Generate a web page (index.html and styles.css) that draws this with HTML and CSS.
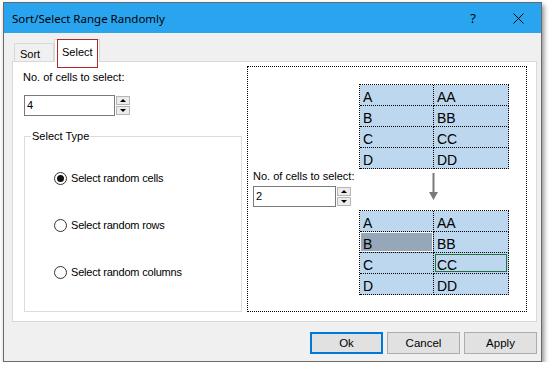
FILE: index.html
```html
<!DOCTYPE html>
<html>
<head>
<meta charset="utf-8">
<link rel="stylesheet" href="styles.css">
</head>
<body>
<div class="window">
  <div class="titlebar">
    <span class="title">Sort/Select Range Randomly</span>
    <span class="help">?</span>
    <svg class="close" width="11" height="11" viewBox="0 0 11 11"><path d="M0.5 0.5 L10.5 10.5 M10.5 0.5 L0.5 10.5" stroke="#000" stroke-width="1" fill="none"/></svg>
  </div>
  <div class="content">
    <div class="tabs">
      <div class="tab">Sort</div>
      <div class="tab active">Select</div>
    </div>
    <div class="highlight"></div>
    <div class="panel">
      <div class="left">
        <div class="label">No. of cells to select:</div>
        <div class="spin-row">
          <div class="input wide">4</div>
          <div class="spin"><span class="sbtn"><i class="up"></i></span><span class="sbtn"><i class="down"></i></span></div>
        </div>
        <div class="group">
          <div class="group-title">Select Type</div>
          <div class="radio first"><span class="circle checked"></span>Select random cells</div>
          <div class="radio"><span class="circle"></span>Select random rows</div>
          <div class="radio"><span class="circle"></span>Select random columns</div>
        </div>
      </div>
      <div class="preview">
        <div class="grid top">
          <div class="c">A</div><div class="c">AA</div>
          <div class="c">B</div><div class="c">BB</div>
          <div class="c">C</div><div class="c">CC</div>
          <div class="c">D</div><div class="c">DD</div>
        </div>
        <div class="mid">
          <div class="label small">No. of cells to select:</div>
          <div class="spin-row">
            <div class="input narrow">2</div>
            <div class="spin"><span class="sbtn"><i class="up"></i></span><span class="sbtn"><i class="down"></i></span></div>
          </div>
        </div>
        <div class="arrow">
          <svg width="9" height="27" viewBox="0 0 9 27"><rect x="3.5" y="0" width="2" height="20" fill="#7a7a7a"/><path d="M0 19 L9 19 L4.5 27 Z" fill="#7a7a7a"/></svg>
        </div>
        <div class="grid bottom">
          <div class="c">A</div><div class="c">AA</div>
          <div class="c sel">B</div><div class="c">BB</div>
          <div class="c">C</div><div class="c cur">CC</div>
          <div class="c">D</div><div class="c">DD</div>
        </div>
      </div>
    </div>
    <div class="buttons">
      <div class="btn default">Ok</div>
      <div class="btn">Cancel</div>
      <div class="btn">Apply</div>
    </div>
  </div>
</div>
</body>
</html>
```
FILE: styles.css
```css
* { box-sizing: border-box; }
body {
  margin: 0;
  background: #fff;
  font-family: "Liberation Sans", Arial, sans-serif;
  font-size: 11px;
  color: #000;
}
.window {
  position: relative;
  margin: 2px 0 0 3px;
  width: 539px;
  height: 360px;
  border: 1px solid #6a6a6a;
  background: #f0f0f0;
  box-shadow: 2px 3px 5px rgba(0,0,0,0.45);
  display: flex;
  flex-direction: column;
}
.titlebar {
  height: 30px;
  flex: none;
  background: #29a5f0;
  display: flex;
  align-items: center;
  padding-left: 8px;
}
.title {
  flex: 1;
  font-family: "Noto Sans", sans-serif;
  font-size: 11.5px;
  color: #000;
}
.help {
  font-family: "Noto Sans", sans-serif;
  font-size: 13px;
  width: 12px;
  text-align: center;
  margin-right: 34px;
}
.close { margin-right: 17px; display: block; }
.content {
  flex: 1;
  padding: 0 4px 7px 8px;
  display: flex;
  flex-direction: column;
}
.tabs {
  height: 29px;
  flex: none;
  display: flex;
  align-items: flex-end;
  padding-left: 2px;
  margin-bottom: -1px;
  position: relative;
  z-index: 1;
}
.tab {
  height: 18px;
  margin-bottom: 1px;
  width: 40px;
  border: 1px solid #d9d9d9;
  border-bottom: none;
  background: #f0f0f0;
  padding: 3px 0 0 5px;
  line-height: 14px;
}
.tab.active {
  height: 23px;
  margin-bottom: 0;
  width: 46px;
  background: #fff;
  padding: 5px 0 0 7px;
}
.highlight {
  position: absolute;
  left: 53px;
  top: 36px;
  width: 41px;
  height: 29px;
  border: 1px solid #b0262b;
  z-index: 2;
}
.panel {
  height: 261px;
  flex: none;
  background: #fff;
  border: 1px solid #d9d9d9;
  display: flex;
  gap: 5px;
  padding: 4px 9px 9px 11px;
}
.left {
  width: 218px;
  display: flex;
  flex-direction: column;
}
.label {
  margin-top: 3px;
  line-height: 16px;
  margin-left: -1px;
}
.spin-row {
  display: flex;
  margin-top: 10px;
  height: 21px;
}
.input {
  height: 21px;
  border: 1px solid #7a7a7a;
  background: #fff;
  padding-left: 2px;
  line-height: 19px;
}
.input.wide { width: 91px; }
.input.narrow { width: 83px; }
.spin {
  margin-left: 1px;
  display: flex;
  flex-direction: column;
  padding-top: 1px;
  gap: 1px;
}
.sbtn {
  width: 14px;
  height: 9px;
  border: 1px solid #b5b5b5;
  background: #ececec;
  display: flex;
  align-items: center;
  justify-content: center;
}
.sbtn i {
  width: 0;
  height: 0;
  border-left: 3px solid transparent;
  border-right: 3px solid transparent;
}
.sbtn i.up { border-bottom: 3px solid #000; }
.sbtn i.down { border-top: 3px solid #000; }
.group {
  margin-top: 20px;
  flex: 1;
  border: 1px solid #dcdcdc;
}
.group-title {
  display: table;
  margin: -9px 0 0 6px;
  padding: 0 1px;
  background: #fff;
  line-height: 16px;
}
.radio {
  display: flex;
  align-items: center;
  height: 16px;
  margin-top: 31px;
  padding-left: 29px;
  letter-spacing: -0.2px;
}
.radio.first { margin-top: 26px; }
.circle {
  width: 13px;
  height: 13px;
  border: 1px solid #333;
  border-radius: 50%;
  background: #fff;
  margin-right: 4px;
  display: flex;
  align-items: center;
  justify-content: center;
}
.circle.checked::after {
  content: "";
  width: 7px;
  height: 7px;
  border-radius: 50%;
  background: #111;
}
.preview {
  width: 280px;
  border: 1px dotted #000;
  display: grid;
  grid-template-columns: 111px 150px;
  grid-template-rows: auto 41px auto;
  padding-top: 17px;
  align-content: start;
}
.grid {
  grid-column: 2;
  display: grid;
  grid-template-columns: 74px 75px;
  border-top: 1px dotted #000;
  border-left: 1px dotted #000;
  width: 150px;
}
.grid.top { grid-row: 1; }
.grid.bottom { grid-row: 3; }
.c {
  height: 21px;
  background: #bdd7ee;
  border-right: 1px dotted #000;
  border-bottom: 1px dotted #000;
  font-size: 14px;
  line-height: 16px;
  padding-left: 3px;
  display: flex;
  align-items: flex-end;
  padding-bottom: 0;
}
.c.sel {
  background: #95a7b8;
  box-shadow: inset 0 0 0 1px #f4f6f8;
}
.c.cur {
  box-shadow: inset 0 0 0 1px #bdd7ee, inset 0 0 0 2px #217346;
}
.mid {
  grid-column: 1;
  grid-row: 2;
  padding-left: 5px;
}
.label.small {
  margin: 0;
  line-height: 14px;
}
.mid .spin-row { margin-top: 3px; }
.arrow {
  grid-column: 2;
  grid-row: 2;
  padding: 4px 0 0 70px;
}
.arrow svg { display: block; }
.buttons {
  margin-top: 10px;
  display: flex;
  justify-content: flex-end;
  gap: 4px;
}
.btn {
  width: 73px;
  height: 22px;
  border: 1px solid #adadad;
  background: #e1e1e1;
  text-align: center;
  line-height: 20px;
  font-size: 11.5px;
}
.btn.default {
  border: 2px solid #0078d7;
  line-height: 18px;
}
```
